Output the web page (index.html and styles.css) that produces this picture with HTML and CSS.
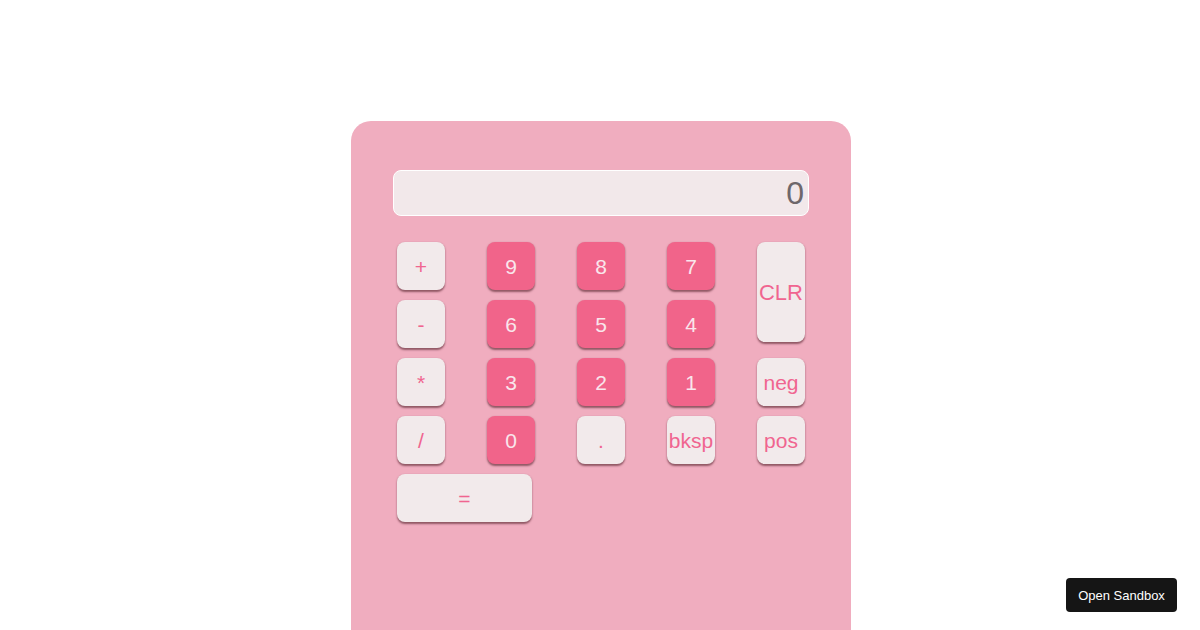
FILE: index.html
```html
<!DOCTYPE html>
<html>
<head>
<meta charset="utf-8">
<link rel="stylesheet" href="styles.css">
</head>
<body>
<div class="calc">
  <div class="display">0</div>
  <div class="keys">
    <button class="key light">+</button>
    <button class="key dark">9</button>
    <button class="key dark">8</button>
    <button class="key dark">7</button>
    <button class="key light clr">CLR</button>
    <button class="key light">-</button>
    <button class="key dark">6</button>
    <button class="key dark">5</button>
    <button class="key dark">4</button>
    <button class="key light">*</button>
    <button class="key dark">3</button>
    <button class="key dark">2</button>
    <button class="key dark">1</button>
    <button class="key light">neg</button>
    <button class="key light">/</button>
    <button class="key dark">0</button>
    <button class="key light">.</button>
    <button class="key light">bksp</button>
    <button class="key light">pos</button>
    <button class="key light eq">=</button>
  </div>
</div>
<button class="sandbox">Open Sandbox</button>
</body>
</html>
```
FILE: styles.css
```css
html, body {
  margin: 0;
  padding: 0;
  background: #ffffff;
  font-family: "Liberation Sans", Arial, sans-serif;
  overflow: hidden;
  height: 630px;
}
.calc {
  width: 500px;
  height: 509px;
  margin: 121px auto 0;
  background: #f0adbf;
  border-radius: 20px 20px 0 0;
  padding: 49px 42px 0;
  box-sizing: border-box;
  position: relative;
  left: 1px;
}
.display {
  height: 46px;
  box-sizing: border-box;
  border: 1px solid #ffffff;
  border-radius: 8px;
  background: #f2e8ea;
  color: #6e676b;
  font-size: 32px;
  text-align: right;
  line-height: 44px;
  padding-right: 4px;
}
.keys {
  display: grid;
  grid-template-columns: repeat(5, 48px);
  grid-auto-rows: 48px;
  column-gap: 42px;
  row-gap: 10px;
  margin-top: 26px;
  margin-left: 4px;
}
.key {
  width: 48px;
  height: 48px;
  border: none;
  border-radius: 8px;
  font-family: "Liberation Sans", Arial, sans-serif;
  font-size: 21px;
  padding: 2px 0 0;
  box-shadow: 0 1.5px 2px rgba(80, 30, 40, 0.6);
}
.light {
  background: #f2eaeb;
  color: #f06590;
}
.dark {
  background: #f1648a;
  color: #f9e6ec;
}
.clr {
  grid-row: span 2;
  height: 100px;
  font-size: 22px;
}
.eq {
  grid-column: span 2;
  width: 135px;
}
.sandbox {
  position: absolute;
  left: 1066px;
  top: 578px;
  width: 111px;
  height: 34px;
  border: none;
  border-radius: 4px;
  background: #151515;
  color: #ffffff;
  font-family: "Liberation Sans", Arial, sans-serif;
  font-size: 13px;
  padding: 0;
}
```
